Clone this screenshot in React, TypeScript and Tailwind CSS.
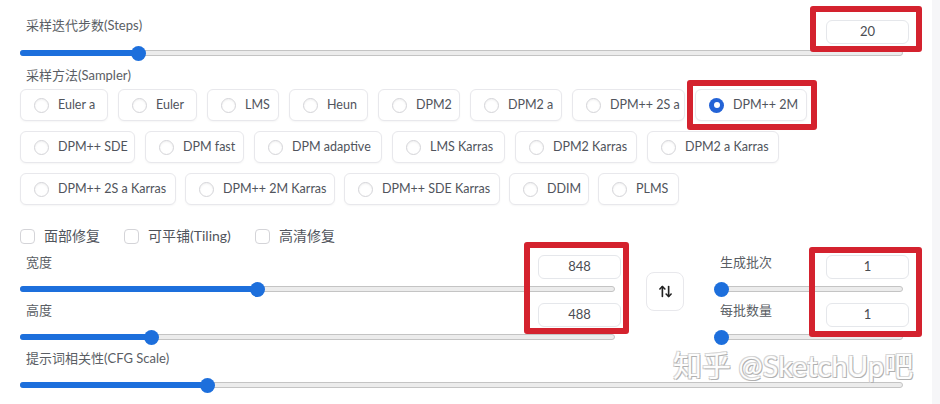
import { ArrowUpDown } from "lucide-react"

const font = "font-['Lato','Noto_Sans_CJK_SC',sans-serif]"

type SliderProps = { width: number, pct: number }

const Slider = ({ width, pct }: SliderProps) => {
    const fill = Math.round(width * pct)
    return (
        <div className="relative h-[14px]" style={{ width }}>
            <div className="absolute inset-x-0 top-[4px] h-[6px] rounded-full bg-[#ececec] border border-[#c4c4c4]" />
            <div className="absolute left-0 top-[4px] h-[6px] rounded-full bg-[#1d6fdc]" style={{ width: fill }} />
            <div className="absolute top-0 w-[15px] h-[15px] -mt-[0.5px] rounded-full bg-[#1d6fdc]" style={{ left: fill - 7 }} />
        </div>
    )
}

const NumBox = ({ value, className }: { value: string, className?: string }) => (
    <div className={"w-[83px] h-[24px] flex items-center justify-center rounded-[6px] border border-[#e5e7eb] bg-white text-[13px] text-[#4a4d52] " + (className || "")}>
        {value}
    </div>
)

type Radio = { name: string, w: number, on?: boolean }

const rows: { gap: string, items: Radio[] }[] = [
    { gap: "gap-[10px]", items: [
        { name: "Euler a", w: 88 }, { name: "Euler", w: 79 }, { name: "LMS", w: 72 }, { name: "Heun", w: 79 },
        { name: "DPM2", w: 82 }, { name: "DPM2 a", w: 92 }, { name: "DPM++ 2S a", w: 113 }, { name: "DPM++ 2M", w: 112, on: true },
    ] },
    { gap: "gap-[10px]", items: [
        { name: "DPM++ SDE", w: 115 }, { name: "DPM fast", w: 99 }, { name: "DPM adaptive", w: 128 },
        { name: "LMS Karras", w: 113 }, { name: "DPM2 Karras", w: 122 }, { name: "DPM2 a Karras", w: 132 },
    ] },
    { gap: "gap-[9px]", items: [
        { name: "DPM++ 2S a Karras", w: 156 }, { name: "DPM++ 2M Karras", w: 150 }, { name: "DPM++ SDE Karras", w: 156 },
        { name: "DDIM", w: 80 }, { name: "PLMS", w: 81 },
    ] },
]

const RadioBtn = ({ name, w, on }: Radio) => (
    <div className="h-[32px] flex items-center pl-[13px] rounded-[6px] border border-[#e8e8ec] bg-white shadow-[0_1px_2px_rgba(0,0,0,0.04)]" style={{ width: w }}>
        {on ? (
            <div className="w-[15px] h-[15px] rounded-full bg-[#2463d6] flex items-center justify-center mr-[9px]">
                <div className="w-[6px] h-[6px] rounded-full bg-white" />
            </div>
        ) : (
            <div className="w-[15px] h-[15px] rounded-full border border-[#d4d4d8] mr-[9px] shadow-[inset_0_1px_2px_rgba(0,0,0,0.06)]" />
        )}
        <span className="text-[12.5px] text-[#50545c] whitespace-nowrap">{name}</span>
    </div>
)

const Check = ({ label, w }: { label: string, w: number }) => (
    <div className="flex items-center" style={{ width: w }}>
        <div className="w-[15px] h-[15px] rounded-[4px] border border-[#d4d4d8] bg-white mr-[9px]" />
        <span className="text-[14px] text-[#50545c] leading-[16px] whitespace-nowrap">{label}</span>
    </div>
)

const Block = ({ label, value, pct, width, pad }: { label: string, value: string, pct: number, width: number, pad: string }) => (
    <div>
        <div className="flex justify-between items-start">
            <span className={"text-[13px] leading-[16px] text-[#5a5e64] " + pad}>{label}</span>
            <NumBox value={value} className="mt-[1px]" />
        </div>
        <div className="mt-[3px]">
            <Slider width={width} pct={pct} />
        </div>
    </div>
)

const RedBox = ({ className }: { className: string }) => (
    <div className={"absolute border-[6px] border-[#d4222e] rounded-[3px] " + className} />
)

export default function App() {
    return (
        <div className={"relative w-[940px] h-[404px] overflow-hidden bg-white flex " + font}>
            <div className="w-[932px] pl-[20px] pt-[17px] flex flex-col">
                {/* steps */}
                <div className="w-[889px] flex justify-between items-start">
                    <span className="pl-[6px] text-[13px] leading-[16px] text-[#5a5e64]">采样迭代步数(Steps)</span>
                    <NumBox value="20" className="mt-[3px]" />
                </div>
                <div className="mt-[2px]">
                    <Slider width={883} pct={0.1336} />
                </div>

                {/* sampler */}
                <span className="mt-[7px] pl-[6px] text-[13px] leading-[16px] text-[#5a5e64]">采样方法(Sampler)</span>
                <div className="mt-[6px] flex flex-col gap-[10px]">
                    {rows.map((r, i) => (
                        <div key={i} className={"flex " + r.gap}>
                            {r.items.map((it) => <RadioBtn key={it.name} {...it} />)}
                        </div>
                    ))}
                </div>

                {/* checkboxes */}
                <div className="mt-[23px] h-[16px] flex items-center">
                    <Check label="面部修复" w={104} />
                    <Check label="可平铺(Tiling)" w={131} />
                    <Check label="高清修复" w={100} />
                </div>

                {/* size + batch */}
                <div className="mt-[10px] flex">
                    <div className="w-[601px] flex flex-col gap-[6px]">
                        <Block label="宽度" value="848" pct={0.398} width={595} pad="pl-[6px]" />
                        <Block label="高度" value="488" pct={0.22} width={595} pad="pl-[6px]" />
                    </div>
                    <div className="ml-[25px] mt-[18px] w-[38px] h-[39px] rounded-[8px] border border-[#e8e8ec] bg-white flex items-center justify-center">
                        <ArrowUpDown size={15} strokeWidth={2.6} className="text-[#222]" />
                    </div>
                    <div className="ml-[36px] w-[189px] flex flex-col gap-[6px]">
                        <Block label="生成批次" value="1" pct={0.004} width={183} pad="" />
                        <Block label="每批数量" value="1" pct={0.004} width={183} pad="" />
                    </div>
                </div>

                {/* cfg */}
                <span className="mt-[6px] pl-[6px] text-[13px] leading-[16px] text-[#5a5e64]">提示词相关性(CFG Scale)</span>
                <div className="mt-[12px]">
                    <Slider width={883} pct={0.212} />
                </div>
            </div>
            <div className="flex-1 bg-[#f6f6f8]" />

            <RedBox className="left-[810px] top-[6px] w-[112px] h-[46px]" />
            <RedBox className="left-[687px] top-[80px] w-[130px] h-[50px]" />
            <RedBox className="left-[524px] top-[242px] w-[105px] h-[92px]" />
            <RedBox className="left-[809px] top-[247px] w-[113px] h-[90px]" />

            <div className="absolute left-[673px] top-[347px] text-[29px] leading-[38px] text-[#fdfdfd] whitespace-nowrap [text-shadow:1px_1px_0_#b0b0b0,-1px_-1px_0_#d8d8d8,1px_-1px_0_#cccccc,-1px_1px_0_#cccccc]">
                知乎 @SketchUp吧
            </div>
        </div>
    )
}
